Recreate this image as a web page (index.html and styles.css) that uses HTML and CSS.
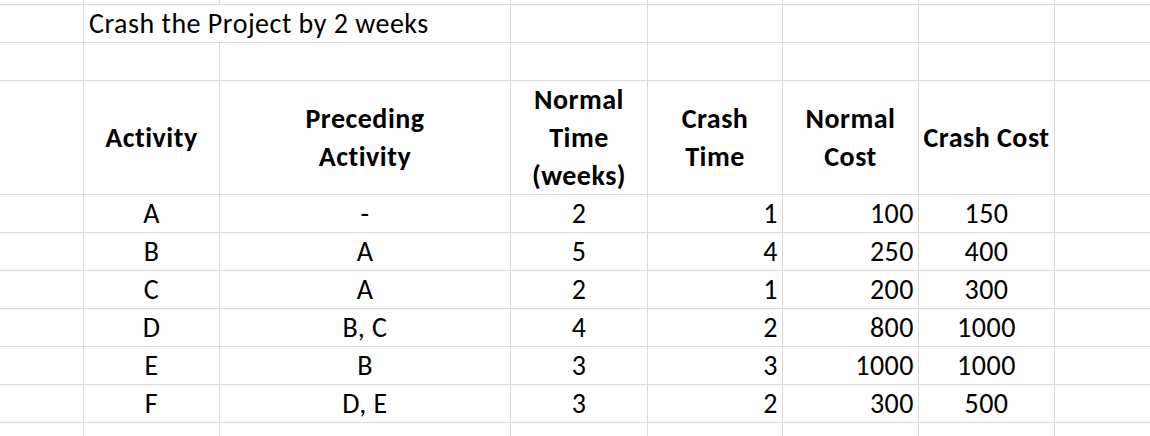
FILE: index.html
```html
<!DOCTYPE html>
<html>
<head>
<meta charset="utf-8">
<link rel="stylesheet" href="styles.css">
</head>
<body>
<div class="sheet">
  <!-- row 0 (partial) -->
  <div class="c"></div><div class="c"></div><div class="c"></div><div class="c"></div><div class="c"></div><div class="c"></div><div class="c"></div><div class="c last"></div>
  <!-- row 1 title -->
  <div class="c"></div><div class="c title">Crash the Project by 2 weeks</div><div class="c"></div><div class="c"></div><div class="c"></div><div class="c"></div><div class="c last"></div>
  <!-- row 2 empty -->
  <div class="c"></div><div class="c"></div><div class="c"></div><div class="c"></div><div class="c"></div><div class="c"></div><div class="c"></div><div class="c last"></div>
  <!-- row 3 header -->
  <div class="c"></div>
  <div class="c hd">Activity</div>
  <div class="c hd">Preceding<br>Activity</div>
  <div class="c hd">Normal<br>Time<br>(weeks)</div>
  <div class="c hd">Crash<br>Time</div>
  <div class="c hd">Normal<br>Cost</div>
  <div class="c hd">Crash Cost</div>
  <div class="c last"></div>
  <!-- data -->
  <div class="c"></div><div class="c ctr">A</div><div class="c ctr">-</div><div class="c ctr">2</div><div class="c rt">1</div><div class="c rt">100</div><div class="c ctr">150</div><div class="c last"></div>
  <div class="c"></div><div class="c ctr">B</div><div class="c ctr">A</div><div class="c ctr">5</div><div class="c rt">4</div><div class="c rt">250</div><div class="c ctr">400</div><div class="c last"></div>
  <div class="c"></div><div class="c ctr">C</div><div class="c ctr">A</div><div class="c ctr">2</div><div class="c rt">1</div><div class="c rt">200</div><div class="c ctr">300</div><div class="c last"></div>
  <div class="c"></div><div class="c ctr">D</div><div class="c ctr">B, C</div><div class="c ctr">4</div><div class="c rt">2</div><div class="c rt">800</div><div class="c ctr">1000</div><div class="c last"></div>
  <div class="c"></div><div class="c ctr">E</div><div class="c ctr">B</div><div class="c ctr">3</div><div class="c rt">3</div><div class="c rt">1000</div><div class="c ctr">1000</div><div class="c last"></div>
  <div class="c"></div><div class="c ctr">F</div><div class="c ctr">D, E</div><div class="c ctr">3</div><div class="c rt">2</div><div class="c rt">300</div><div class="c ctr">500</div><div class="c last"></div>
  <!-- partial row -->
  <div class="c"></div><div class="c"></div><div class="c"></div><div class="c"></div><div class="c"></div><div class="c"></div><div class="c"></div><div class="c last"></div>
</div>
</body>
</html>
```

FILE: styles.css
```css
html, body {
  margin: 0;
  padding: 0;
  background: #ffffff;
  overflow: hidden;
}

.sheet {
  width: 1150px;
  height: 436px;
  overflow: hidden;
  display: grid;
  grid-template-columns: 84px 136px 291px 137px 135px 136px 136px 1fr;
  grid-template-rows: 5px 38px 38px 114px repeat(6, 38px) 38px;
  font-family: "Carlito", "Lato", sans-serif;
  font-size: 28px;
  letter-spacing: 0.5px;
  color: #000000;
}

.c {
  box-sizing: border-box;
  border-right: 1px solid #dadada;
  border-bottom: 1px solid #dadada;
  line-height: 38px;
  white-space: nowrap;
  overflow: visible;
}

.c.last {
  border-right: none;
}

.title {
  grid-column: span 2;
  padding-left: 5px;
}

.hd {
  font-weight: bold;
  text-align: center;
  display: flex;
  align-items: center;
  justify-content: center;
}

.ctr {
  text-align: center;
}

.rt {
  text-align: right;
  padding-right: 4px;
}
```
